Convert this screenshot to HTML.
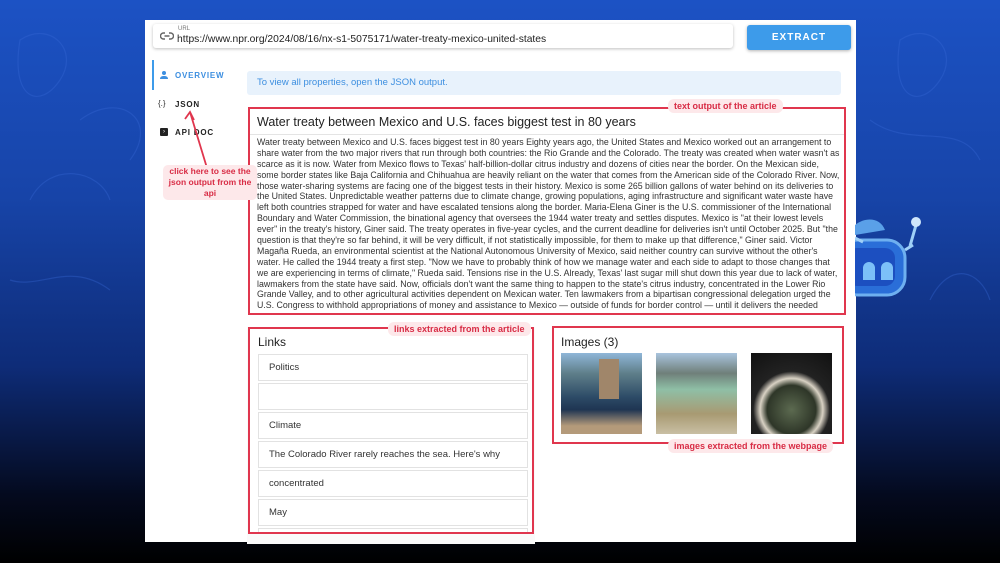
<!DOCTYPE html>
<html><head><meta charset="utf-8"><style>
*{box-sizing:border-box;margin:0;padding:0}
body{width:1000px;height:563px;overflow:hidden;font-family:"Liberation Sans",sans-serif;background:linear-gradient(180deg,#1c52c4 0%,#1744a8 35%,#0e2c78 65%,#040a1e 88%,#000 100%);position:relative}
.panel{position:absolute;left:145px;top:20px;width:711px;height:522px;background:#fff}
.abs{position:absolute}
.red{border:2px solid #e0364e}
.tag{position:absolute;background:#fde8ea;color:#d82c45;font-weight:bold;font-size:9px;padding:2px 6px;border-radius:6px;white-space:nowrap}
.line{white-space:nowrap;font-size:8.8px;letter-spacing:0;color:#333;height:10.9px;line-height:10.9px}
.li{position:absolute;left:10px;width:270px;height:27px;border:1px solid #e2e2e2;font-size:9.5px;color:#333;padding-left:10px;line-height:26px;background:#fff}
</style></head><body>
<svg class="abs" style="left:0;top:0" width="1000" height="563" fill="none" stroke="#3a6ad8" stroke-opacity=".35" stroke-width="1.2">
<path d="M20 40c30-20 60 10 40 40s-50 20-40-40zM80 120c40-30 80 0 50 40M30 200c20-40 70-30 80 0M900 40c30-20 60 10 40 40s-50 20-40-40zM870 120c40 30 90 0 110 40M930 300c20-40 50-30 60 0M10 280c30 10 60-20 100 10"/>
</svg>
<div class="panel">
 <div class="abs" style="left:8px;top:4px;width:580px;height:24px;border-radius:3px;box-shadow:0 1px 3px rgba(0,0,0,.25)">
  <svg class="abs" style="left:7px;top:7px" width="14" height="10" viewBox="0 0 14 10" fill="none" stroke="#666" stroke-width="1.4"><path d="M5 2H3.5a3 3 0 0 0 0 6H5M9 2h1.5a3 3 0 0 1 0 6H9M4.5 5h5"/></svg>
  <div class="abs" style="left:25px;top:2px;font-size:6px;color:#777">URL</div>
  <div class="abs" style="left:24px;top:10px;font-size:10.3px;color:#222;white-space:nowrap">https://www.npr.org/2024/08/16/nx-s1-5075171/water-treaty-mexico-united-states</div>
 </div>
 <div class="abs" style="left:602px;top:5px;width:104px;height:25px;background:#3d9bea;border-radius:3px;color:#fff;font-size:10px;font-weight:bold;letter-spacing:1px;text-align:center;line-height:25px;box-shadow:0 1px 3px rgba(0,0,0,.3)">EXTRACT</div>
 <div class="abs" style="left:7px;top:40px;width:2px;height:30px;background:#3d9bea"></div>
 <svg class="abs" style="left:15px;top:51px" width="8" height="8" viewBox="0 0 8 8" fill="#3d8fe0"><circle cx="4" cy="2" r="2"/><path d="M0 8c0-2.5 2-3 4-3s4 .5 4 3z"/></svg>
 <div class="abs" style="left:30px;top:51px;font-size:8px;font-weight:bold;color:#3d8fe0;letter-spacing:.8px">OVERVIEW</div>
 <div class="abs" style="left:13px;top:79px;font-size:8px;color:#333">{.}</div>
 <div class="abs" style="left:30px;top:80px;font-size:8px;font-weight:bold;color:#222;letter-spacing:.8px">JSON</div>
 <div class="abs" style="left:15px;top:108px;width:8px;height:8px;background:#222;border-radius:1px;color:#fff;font-size:6px;line-height:8px;text-align:center">›</div>
 <div class="abs" style="left:30px;top:108px;font-size:8px;font-weight:bold;color:#222;letter-spacing:.8px">API DOC</div>
 <div class="abs" style="left:102px;top:51px;width:594px;height:24px;background:#e8f2fc;border-radius:3px;font-size:9.5px;color:#3d8fe0;padding-left:10px;line-height:24px">To view all properties, open the JSON output.</div>
 <div class="abs red" style="left:103px;top:87px;width:598px;height:208px;background:#fff;overflow:hidden">
  <div class="abs" style="left:7px;top:6px;font-size:12.5px;color:#222">Water treaty between Mexico and U.S. faces biggest test in 80 years</div>
  <div class="abs" style="left:0;top:25px;width:594px;border-top:1px solid #e4e4e4"></div>
  <div class="abs" style="left:7px;top:28px">
<div class="line">Water treaty between Mexico and U.S. faces biggest test in 80 years Eighty years ago, the United States and Mexico worked out an arrangement to</div>
<div class="line">share water from the two major rivers that run through both countries: the Rio Grande and the Colorado. The treaty was created when water wasn't as</div>
<div class="line">scarce as it is now. Water from Mexico flows to Texas' half-billion-dollar citrus industry and dozens of cities near the border. On the Mexican side,</div>
<div class="line">some border states like Baja California and Chihuahua are heavily reliant on the water that comes from the American side of the Colorado River. Now,</div>
<div class="line">those water-sharing systems are facing one of the biggest tests in their history. Mexico is some 265 billion gallons of water behind on its deliveries to</div>
<div class="line">the United States. Unpredictable weather patterns due to climate change, growing populations, aging infrastructure and significant water waste have</div>
<div class="line">left both countries strapped for water and have escalated tensions along the border. Maria-Elena Giner is the U.S. commissioner of the International</div>
<div class="line">Boundary and Water Commission, the binational agency that oversees the 1944 water treaty and settles disputes. Mexico is "at their lowest levels</div>
<div class="line">ever" in the treaty's history, Giner said. The treaty operates in five-year cycles, and the current deadline for deliveries isn't until October 2025. But "the</div>
<div class="line">question is that they're so far behind, it will be very difficult, if not statistically impossible, for them to make up that difference," Giner said. Victor</div>
<div class="line">Magaña Rueda, an environmental scientist at the National Autonomous University of Mexico, said neither country can survive without the other's</div>
<div class="line">water. He called the 1944 treaty a first step. "Now we have to probably think of how we manage water and each side to adapt to those changes that</div>
<div class="line">we are experiencing in terms of climate," Rueda said. Tensions rise in the U.S. Already, Texas' last sugar mill shut down this year due to lack of water,</div>
<div class="line">lawmakers from the state have said. Now, officials don't want the same thing to happen to the state's citrus industry, concentrated in the Lower Rio</div>
<div class="line">Grande Valley, and to other agricultural activities dependent on Mexican water. Ten lawmakers from a bipartisan congressional delegation urged the</div>
<div class="line">U.S. Congress to withhold appropriations of money and assistance to Mexico — outside of funds for border control — until it delivers the needed</div>
  </div>
 </div>
 <div class="tag" style="left:523px;top:79px">text output of the article</div>
 <div class="abs" style="left:102px;top:307px;width:288px;height:217px;background:#fafafa"></div>
 <div class="abs red" style="left:103px;top:307px;width:286px;height:207px;background:#fff;overflow:hidden">
  <div class="abs" style="left:8px;top:6px;font-size:12px;color:#222">Links</div>
  <div class="li" style="top:25px;left:8px">Politics</div>
  <div class="li" style="top:54px;left:8px"></div>
  <div class="li" style="top:83px;left:8px">Climate</div>
  <div class="li" style="top:112px;left:8px">The Colorado River rarely reaches the sea. Here's why</div>
  <div class="li" style="top:141px;left:8px">concentrated</div>
  <div class="li" style="top:170px;left:8px">May</div>
  <div class="li" style="top:199px;left:8px"></div>
 </div>
 <div class="tag" style="left:243px;top:302px">links extracted from the article</div>
 <div class="abs red" style="left:407px;top:306px;width:292px;height:118px;background:#fff">
  <div class="abs" style="left:7px;top:7px;font-size:12px;color:#222">Images (3)</div>
  <div class="abs" style="left:7px;top:25px;width:81px;height:81px;background:linear-gradient(180deg,#8fb6d8 0%,#5f7f8a 25%,#2c4a66 55%,#1f3552 70%,#b49a7a 90%)"><div class="abs" style="left:38px;top:6px;width:20px;height:40px;background:#a0866a"></div></div>
  <div class="abs" style="left:102px;top:25px;width:81px;height:81px;background:linear-gradient(180deg,#a9c4de 0%,#6f7f7a 25%,#8fbfa6 45%,#a89a72 75%,#c9bfa4 100%)"></div>
  <div class="abs" style="left:197px;top:25px;width:81px;height:81px;background:radial-gradient(circle at 50% 70%,#5c6a50 0%,#2e3628 35%,#d9d2c4 45%,#222 55%,#111 100%)"></div>
 </div>
 <div class="tag" style="left:523px;top:419px">images extracted from the webpage</div>
 <svg class="abs" style="left:35px;top:88px" width="40" height="62" viewBox="0 0 40 62" fill="none" stroke="#e0364e" stroke-width="1.8"><path d="M27 60L10 4M5 11l5-7 4 8"/></svg>
 <div class="abs" style="left:18px;top:145px;width:94px;text-align:center;font-size:8.5px;font-weight:bold;color:#d82c45;background:#fde8ea;border-radius:5px;line-height:11px;padding:1px 0">click here to see the json output from the api</div>
</div>
<svg class="abs" style="left:855px;top:200px" width="70" height="100" viewBox="0 0 70 100">
 <path d="M0 25c10-8 25-8 30 5l-30 5z" fill="#5aa0e8"/>
 <rect x="-15" y="40" width="65" height="55" rx="18" fill="#2a6ed8" stroke="#6eb0f0" stroke-width="3"/>
 <rect x="-8" y="48" width="48" height="38" rx="10" fill="#1c4fc0"/>
 <path d="M8 80v-12a6 6 0 0 1 12 0v12zM26 80v-12a6 6 0 0 1 12 0v12z" fill="#7cc0f8"/>
 <line x1="8" y1="42" x2="0" y2="38" stroke="#9fd0f8" stroke-width="3"/>
 <line x1="50" y1="50" x2="58" y2="45" stroke="#9fd0f8" stroke-width="3"/>
 <line x1="55" y1="46" x2="61" y2="25" stroke="#9fd0f8" stroke-width="3"/>
 <circle cx="61" cy="22" r="5" fill="#cfe6fb"/>
</svg>
</body></html>
